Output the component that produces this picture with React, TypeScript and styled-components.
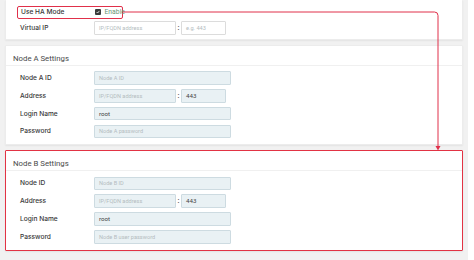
import { createGlobalStyle, styled } from 'styled-components';

const Global = createGlobalStyle`
  html, body { margin: 0; padding: 0; background: #ffffff; }
  body { font-family: Roboto, 'Liberation Sans', sans-serif; }
`;

const Page = styled.div`
  position: relative;
  width: 468px;
  height: 260px;
  box-sizing: border-box;
  background: #f1f1f1;
  padding: 0 5px 0 5px;
  display: flex;
  flex-direction: column;
  gap: 5px;
`;

const Card = styled.div<{ $highlight?: boolean }>`
  background: #ffffff;
  border: ${(p) => (p.$highlight ? '1.5px solid #e23344' : '1px solid #ececec')};
  border-radius: 1px;
  box-shadow: 0 1px 2px rgba(0, 0, 0, 0.06);
`;

const TopCard = styled(Card)`
  border-top: none;
  height: 40px;
  box-sizing: border-box;
  padding: 5px 0 0 14px;
  display: flex;
  flex-direction: column;
  gap: 2px;
`;

const Header = styled.div`
  height: 20px;
  box-sizing: border-box;
  padding: 8px 0 0 7px;
  border-bottom: 1px solid #f0f0f0;
  font-size: 7.8px;
  color: #4a4a4a;
`;

const Body = styled.div`
  padding: 5px 0 6px 14px;
  display: flex;
  flex-direction: column;
  gap: 3.8px;
`;

const Row = styled.div`
  display: flex;
  align-items: center;
  height: 14px;
`;

const Label = styled.div`
  width: 74px;
  flex: none;
  font-family: Inter, Roboto, sans-serif;
  font-size: 6.6px;
  font-weight: 500;
  color: #383838;
  box-sizing: border-box;
`;

const HaBox = styled.div`
  display: flex;
  align-items: center;
  height: 13px;
  margin-left: -3px;
  padding-left: 3px;
  width: 106px;
  box-sizing: border-box;
  border: 1px solid #e0304a;
  border-radius: 2px;
`;

const Check = styled.span`
  width: 5.5px;
  height: 5.5px;
  flex: none;
  line-height: 0;
  background: #3b3b3b;
  border-radius: 1px;
  display: flex;
  align-items: center;
  justify-content: center;
  margin-right: 4px;
`;

const Enable = styled.span`
  font-size: 6.8px;
  color: #6a9475;
`;

const Input = styled.div<{ $w: number; $plain?: boolean; $filled?: boolean }>`
  width: ${(p) => p.$w}px;
  height: 13.5px;
  box-sizing: border-box;
  flex: none;
  background: ${(p) => (p.$plain ? '#ffffff' : '#e9f1f4')};
  border: 1px solid ${(p) => (p.$plain ? '#dcdcdc' : '#cddbe1')};
  border-radius: 1px;
  padding-left: 4px;
  display: flex;
  align-items: center;
  font-size: ${(p) => (p.$filled ? '6.2px' : '5.6px')};
  color: ${(p) => (p.$filled ? '#444444' : '#b4bcc0')};
`;

const Colon = styled.span`
  width: 5px;
  flex: none;
  text-align: center;
  font-size: 7px;
  font-weight: 700;
  color: #555;
`;

const Overlay = styled.svg`
  position: absolute;
  left: 0;
  top: 0;
  pointer-events: none;
`;

function AddressRow({ label, plain, port }: { label: string; plain?: boolean; port?: string }) {
  return (
    <Row>
      <Label>{label}</Label>
      <Input $w={82} $plain={plain}>IP/FQDN address</Input>
      <Colon>:</Colon>
      <Input $w={45} $plain={plain} $filled={!!port}>{port ?? 'e.g. 443'}</Input>
    </Row>
  );
}

function NodeCard({ title, idLabel, idPh, pwPh, highlight }: { title: string; idLabel: string; idPh: string; pwPh: string; highlight?: boolean }) {
  return (
    <Card $highlight={highlight}>
      <Header>{title}</Header>
      <Body>
        <Row>
          <Label>{idLabel}</Label>
          <Input $w={137}>{idPh}</Input>
        </Row>
        <AddressRow label="Address" port="443" />
        <Row>
          <Label>Login Name</Label>
          <Input $w={137} $filled>root</Input>
        </Row>
        <Row>
          <Label>Password</Label>
          <Input $w={137}>{pwPh}</Input>
        </Row>
      </Body>
    </Card>
  );
}

export default function App() {
  return (
    <>
      <Global />
      <Page>
        <TopCard>
          <Row>
            <HaBox>
              <Label>Use HA Mode</Label>
              <Check>
                <svg width="4" height="4" viewBox="0 0 4 4">
                  <path d="M0.6 2 L1.6 3 L3.4 0.9" stroke="#fff" strokeWidth="0.8" fill="none" />
                </svg>
              </Check>
              <Enable>Enable</Enable>
            </HaBox>
          </Row>
          <AddressRow label="Virtual IP" plain />
        </TopCard>
        <NodeCard title="Node A Settings" idLabel="Node A ID" idPh="Node A ID" pwPh="Node A password" />
        <NodeCard title="Node B Settings" idLabel="Node ID" idPh="Node B ID" pwPh="Node B user password" highlight />
      </Page>
      <Overlay width="474" height="260" viewBox="0 0 474 260">
        <path d="M123 12 H434.5 Q438 12 438 15.5 V147" stroke="#e0304a" strokeWidth="1" fill="none" />
        <path d="M435.5 146 L440.5 146 L438 150.5 Z" fill="#e0304a" />
      </Overlay>
    </>
  );
}
